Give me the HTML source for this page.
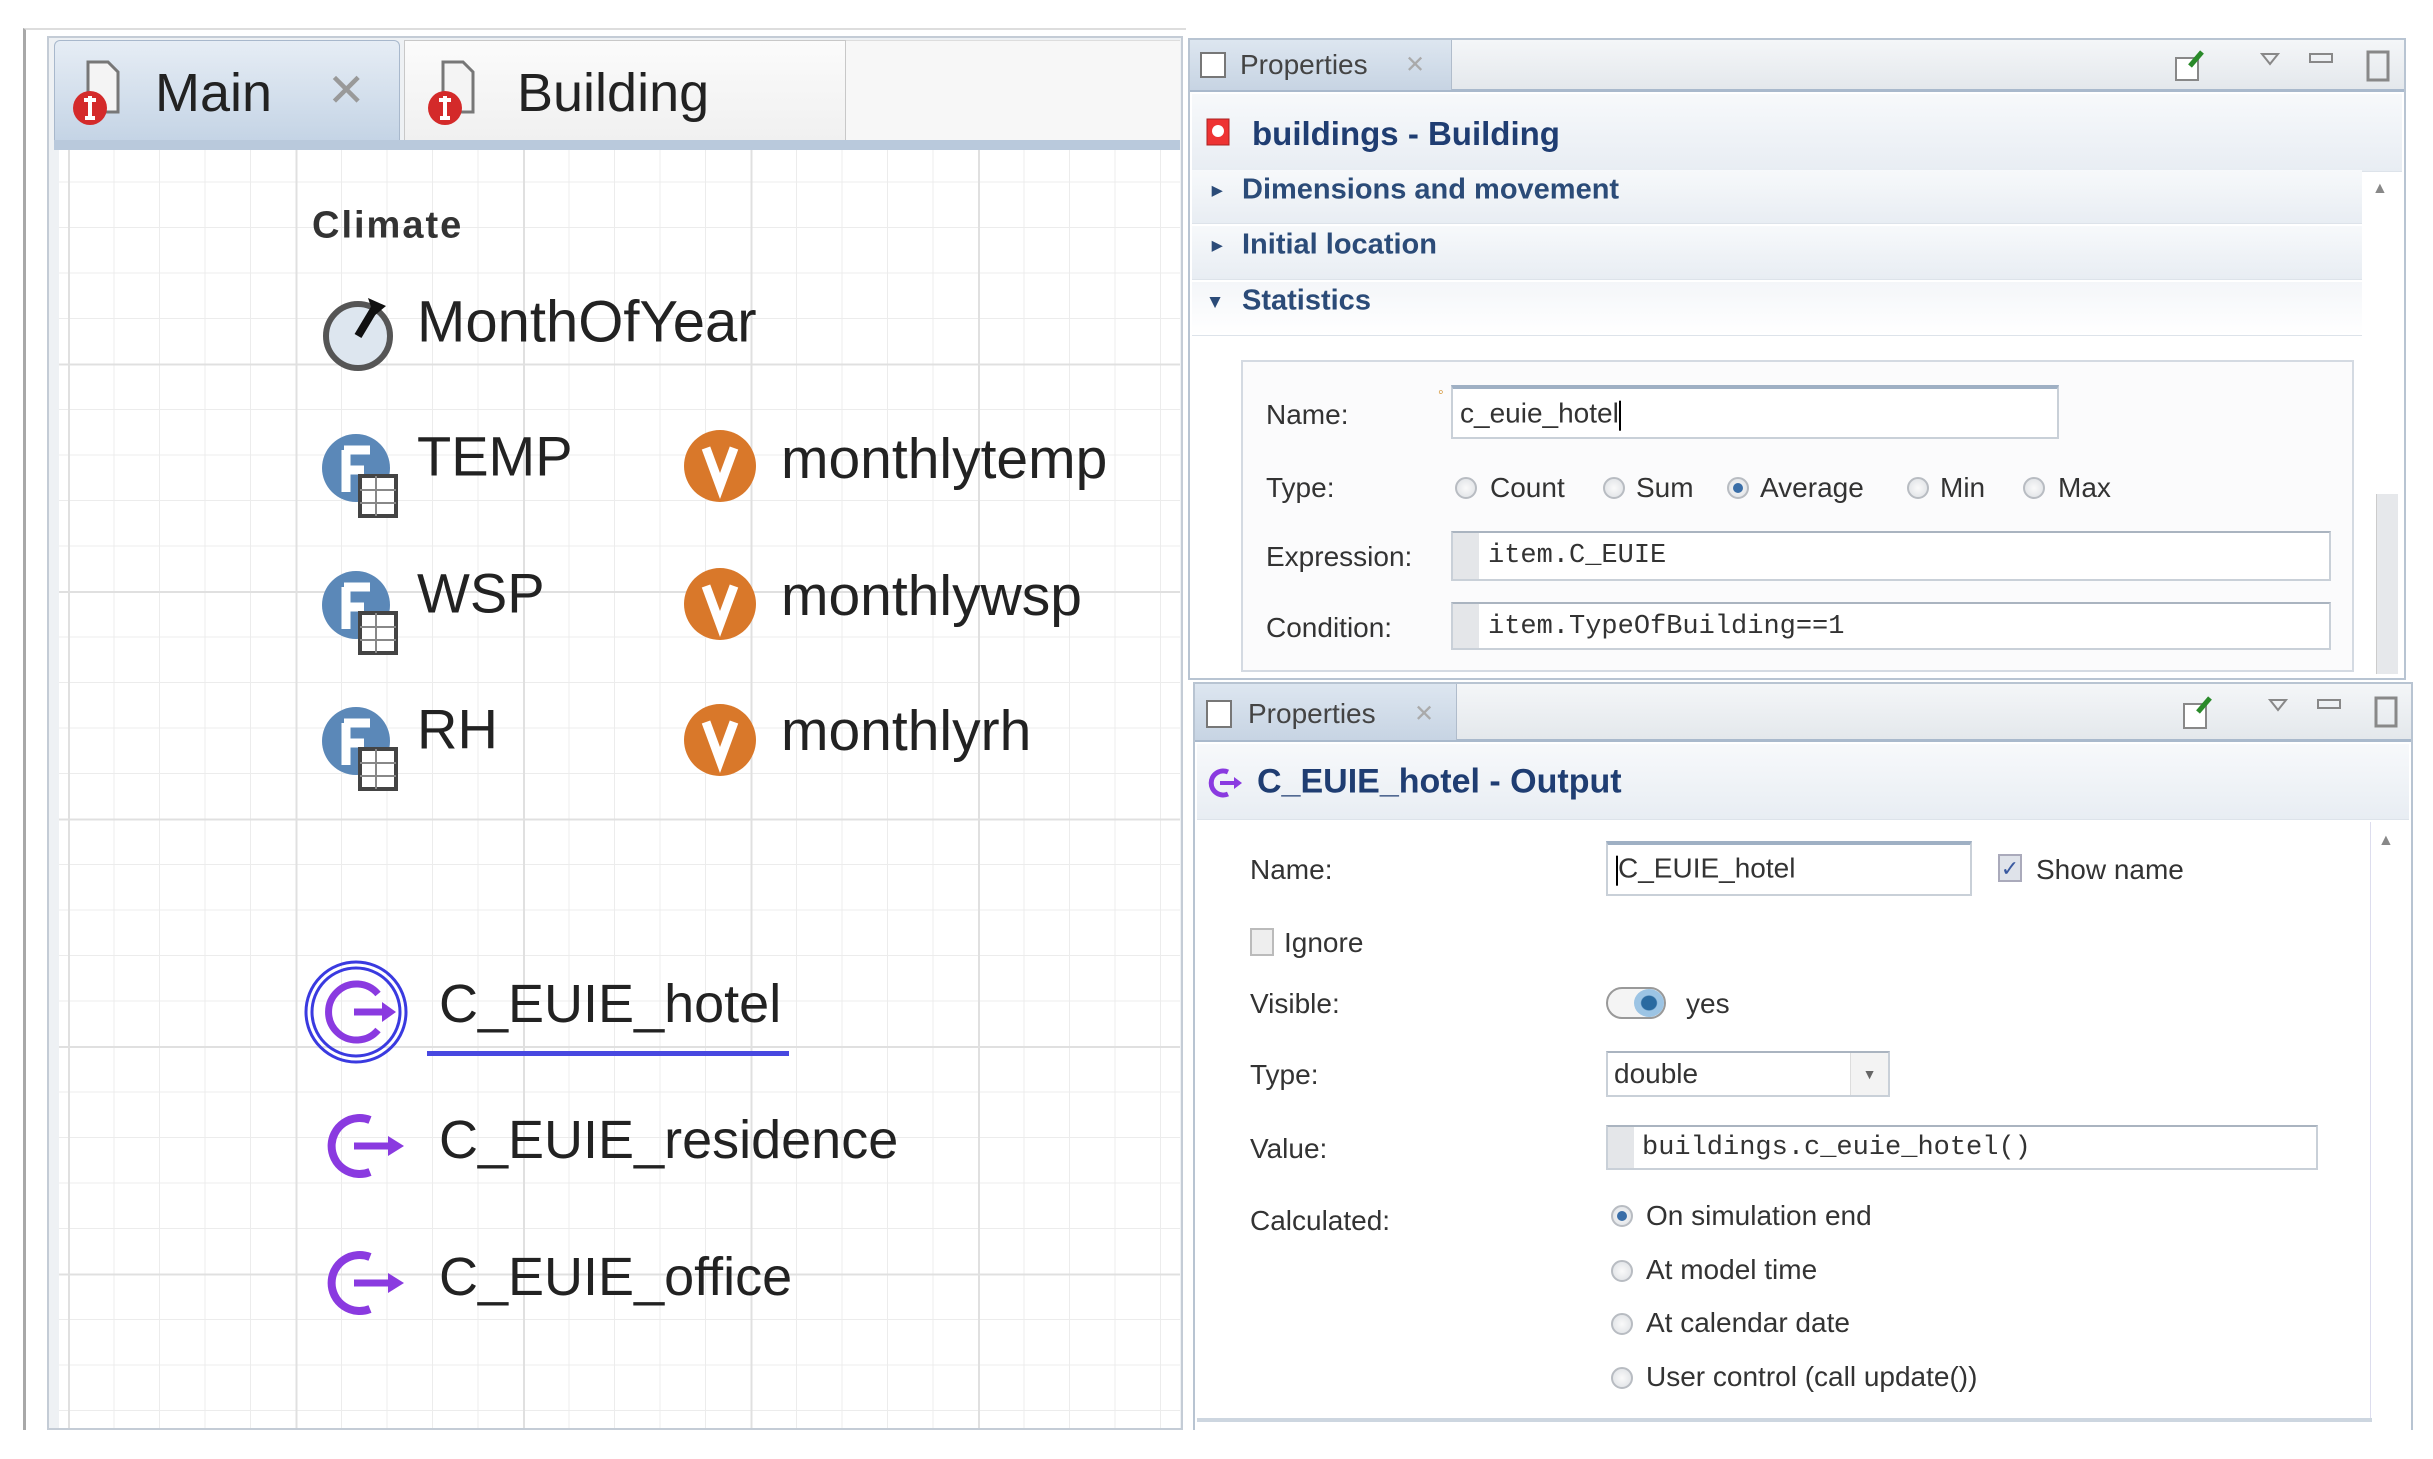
<!DOCTYPE html>
<html><head><meta charset="utf-8"><style>
*{margin:0;padding:0;box-sizing:border-box}
body{width:2433px;height:1459px;background:#fff;position:relative;overflow:hidden;font-family:"Liberation Sans",sans-serif;color:#222}
.a{position:absolute;white-space:nowrap}
.grid{background-color:#fff;background-image:
linear-gradient(to right,#e0e0e0 2px,transparent 2px),
linear-gradient(to bottom,#e0e0e0 2px,transparent 2px),
linear-gradient(to right,#ececec 1px,transparent 1px),
linear-gradient(to bottom,#ececec 1px,transparent 1px);
background-size:227.5px 227.5px,227.5px 227.5px,45.5px 45.5px,45.5px 45.5px;
background-position:9px 0,0 -14px,9px 0,0 -14px}
.lbl{font-size:28px;color:#333;transform:translateY(-50%)}
.big{font-size:56px;color:#222;transform:translateY(-50%)}
.sec{font-size:29px;font-weight:bold;color:#2b4b78;transform:translateY(-50%)}
.inp{position:absolute;background:#fff;border:2px solid #c9d0d8;border-top-color:#aab4c0}
.mono{font-family:"Liberation Mono",monospace;font-size:27px;color:#333}
.rad{position:absolute;width:22px;height:22px;border-radius:50%;border:2px solid #b8bcc2;background:radial-gradient(#fafafa,#dcdfe3);transform:translate(-50%,-50%)}
.rad.on::after{content:"";position:absolute;left:4px;top:4px;width:10px;height:10px;border-radius:50%;background:#3a6ea8}
.hdr{position:absolute;background:linear-gradient(#f4f6f8,#e4e8ec);border-bottom:3px solid #a9b9cc}
.ptab{position:absolute;background:linear-gradient(#dde6f0,#c7d4e3);border-right:1px solid #b0bccb}
.strip{position:absolute;background:linear-gradient(#f7f9fb,#e8edf3);border-bottom:1px solid #dde3ea}
</style></head><body>

<div class="a" style="left:23px;top:28px;width:1163px;height:1402px;border-left:3px solid #a8a8a8;border-top:2px solid #ddd"></div>
<div class="a" style="left:47px;top:36px;width:1136px;height:1394px;border:2px solid #c4ccd6;background:#eef1f4"></div>
<div class="a" style="left:54px;top:40px;width:346px;height:108px;background:linear-gradient(#e6edf5,#c2d2e4);border:1px solid #a8b8cc;border-bottom:none;border-radius:6px 6px 0 0"></div>
<div class="a" style="left:404px;top:40px;width:442px;height:102px;background:linear-gradient(#fbfbfb,#f0f0f0);border:1px solid #c8c8c8;border-bottom:none"></div>
<div class="a" style="left:846px;top:40px;width:334px;height:102px;background:#f7f7f7;border-top:1px solid #ddd"></div>
<div class="a" style="left:54px;top:140px;width:1126px;height:10px;background:#b9c9dc"></div>
<svg class="a" style="left:70px;top:58px" width="62" height="72" viewBox="0 0 62 72"><path d="M18 4h20l10 10v40H18z" fill="#f4f4f4" stroke="#777" stroke-width="3"/><circle cx="20" cy="50" r="17" fill="#d42a2a"/><path d="M14 42h12M20 38v22M15 60h10" stroke="#fff" stroke-width="4"/></svg>
<div class="a" style="left:155px;top:93px;font-size:54px;color:#222;transform:translateY(-50%)">Main</div>
<div class="a" style="left:327px;top:90px;font-size:46px;color:#999;transform:translateY(-50%)">✕</div>
<svg class="a" style="left:425px;top:58px" width="62" height="72" viewBox="0 0 62 72"><path d="M18 4h20l10 10v40H18z" fill="#f4f4f4" stroke="#777" stroke-width="3"/><circle cx="20" cy="50" r="17" fill="#d42a2a"/><path d="M14 42h12M20 38v22M15 60h10" stroke="#fff" stroke-width="4"/></svg>
<div class="a" style="left:517px;top:93px;font-size:54px;color:#222;transform:translateY(-50%)">Building</div>
<div class="a grid" style="left:59px;top:150px;width:1121px;height:1278px"></div>

<div class="a" style="left:312px;top:226px;font-size:38px;font-weight:bold;color:#333;letter-spacing:2px;transform:translateY(-50%)">Climate</div>

<svg class="a" style="left:318px;top:290px" width="84" height="84" viewBox="0 0 84 84"><circle cx="40" cy="46" r="32" fill="#dde6ef" stroke="#555" stroke-width="6"/><path d="M40 46L58 16" stroke="#111" stroke-width="8"/><path d="M50 8l18 8-12 10z" fill="#111"/></svg>
<div class="a big" style="left:417px;top:322px;font-size:58px">MonthOfYear</div>

<svg class="a" style="left:318px;top:430px" width="90" height="90" viewBox="0 0 90 90"><circle cx="38" cy="38" r="34" fill="#5b88b8"/><path d="M26 20h26M28 20v42M28 40h18" stroke="#fff" stroke-width="9"/><rect x="42" y="46" width="36" height="40" fill="#fff" stroke="#444" stroke-width="4"/><path d="M42 60h36M42 73h36M58 46v40" stroke="#888" stroke-width="2"/></svg>
<div class="a big" style="left:417px;top:456px">TEMP</div>
<svg class="a" style="left:318px;top:567px" width="90" height="90" viewBox="0 0 90 90"><circle cx="38" cy="38" r="34" fill="#5b88b8"/><path d="M26 20h26M28 20v42M28 40h18" stroke="#fff" stroke-width="9"/><rect x="42" y="46" width="36" height="40" fill="#fff" stroke="#444" stroke-width="4"/><path d="M42 60h36M42 73h36M58 46v40" stroke="#888" stroke-width="2"/></svg>
<div class="a big" style="left:417px;top:593px">WSP</div>
<svg class="a" style="left:318px;top:703px" width="90" height="90" viewBox="0 0 90 90"><circle cx="38" cy="38" r="34" fill="#5b88b8"/><path d="M26 20h26M28 20v42M28 40h18" stroke="#fff" stroke-width="9"/><rect x="42" y="46" width="36" height="40" fill="#fff" stroke="#444" stroke-width="4"/><path d="M42 60h36M42 73h36M58 46v40" stroke="#888" stroke-width="2"/></svg>
<div class="a big" style="left:417px;top:729px">RH</div>

<svg class="a" style="left:682px;top:428px" width="76" height="76" viewBox="0 0 76 76"><circle cx="38" cy="38" r="36" fill="#d9782a"/><path d="M24 20l14 38 14-38" fill="none" stroke="#fff" stroke-width="9"/></svg>
<div class="a big" style="left:781px;top:459px;font-size:57px">monthlytemp</div>
<svg class="a" style="left:682px;top:566px" width="76" height="76" viewBox="0 0 76 76"><circle cx="38" cy="38" r="36" fill="#d9782a"/><path d="M24 20l14 38 14-38" fill="none" stroke="#fff" stroke-width="9"/></svg>
<div class="a big" style="left:781px;top:596px;font-size:57px">monthlywsp</div>
<svg class="a" style="left:682px;top:702px" width="76" height="76" viewBox="0 0 76 76"><circle cx="38" cy="38" r="36" fill="#d9782a"/><path d="M24 20l14 38 14-38" fill="none" stroke="#fff" stroke-width="9"/></svg>
<div class="a big" style="left:781px;top:731px;font-size:57px">monthlyrh</div>

<svg class="a" style="left:302px;top:958px" width="110" height="110" viewBox="0 0 110 110"><circle cx="54" cy="54" r="50" fill="none" stroke="#3a3ae0" stroke-width="3"/><circle cx="54" cy="54" r="44" fill="none" stroke="#3a3ae0" stroke-width="3"/><path d="M76 36A28 28 0 1 0 76 72" fill="none" stroke="#8a3ae0" stroke-width="7"/><path d="M52 54h34" stroke="#8a3ae0" stroke-width="7"/><path d="M80 44l14 10-14 10z" fill="#8a3ae0"/></svg>
<div class="a big" style="left:439px;top:1004px;font-size:54px">C_EUIE_hotel</div>
<div class="a" style="left:427px;top:1051px;width:362px;height:5px;background:#4848e0"></div>
<svg class="a" style="left:316px;top:1106px" width="96" height="80" viewBox="0 0 96 80"><path d="M54 14A28 28 0 1 0 54 66" fill="none" stroke="#8a3ae0" stroke-width="8"/><path d="M38 40h40" stroke="#8a3ae0" stroke-width="7"/><path d="M72 30l16 10-16 10z" fill="#8a3ae0"/></svg>
<div class="a big" style="left:439px;top:1140px;font-size:54px">C_EUIE_residence</div>
<svg class="a" style="left:316px;top:1243px" width="96" height="80" viewBox="0 0 96 80"><path d="M54 14A28 28 0 1 0 54 66" fill="none" stroke="#8a3ae0" stroke-width="8"/><path d="M38 40h40" stroke="#8a3ae0" stroke-width="7"/><path d="M72 30l16 10-16 10z" fill="#8a3ae0"/></svg>
<div class="a big" style="left:439px;top:1277px;font-size:54px">C_EUIE_office</div>

<div class="a" style="left:1188px;top:38px;width:1218px;height:642px;border:2px solid #b8c4d2;background:#fff"></div>
<div class="hdr" style="left:1190px;top:40px;width:1214px;height:52px"></div>
<div class="ptab" style="left:1190px;top:40px;width:262px;height:50px"></div>
<div class="a" style="left:1200px;top:52px;width:26px;height:26px;border:2px solid #777;background:#fff"></div>
<div class="a" style="left:1240px;top:65px;font-size:28px;color:#444;transform:translateY(-50%)">Properties</div>
<div class="a" style="left:1405px;top:65px;font-size:24px;color:#aaa;transform:translateY(-50%)">✕</div>
<svg class="a" style="left:2172px;top:48px" width="230" height="36" viewBox="0 0 230 36"><rect x="4" y="10" width="22" height="22" fill="#fff" stroke="#888" stroke-width="2"/><path d="M18 18l12-14" stroke="#2a8a2a" stroke-width="5"/><path d="M90 6l8 10 8-10z" fill="none" stroke="#888" stroke-width="2"/><rect x="138" y="6" width="22" height="8" fill="none" stroke="#888" stroke-width="2"/><rect x="196" y="4" width="20" height="28" fill="none" stroke="#888" stroke-width="3"/></svg>

<div class="strip" style="left:1192px;top:94px;width:1210px;height:78px"></div>
<svg class="a" style="left:1206px;top:118px" width="24" height="28" viewBox="0 0 24 28"><rect x="1" y="1" width="22" height="26" fill="#e33" stroke="#a22"/><circle cx="12" cy="13" r="6" fill="#fff"/></svg>
<div class="a" style="left:1252px;top:134px;font-size:33px;font-weight:bold;color:#1f3d72;transform:translateY(-50%)">buildings - Building</div>
<div class="strip" style="left:1192px;top:170px;width:1170px;height:54px"></div>
<div class="strip" style="left:1192px;top:226px;width:1170px;height:54px"></div>
<div class="strip" style="left:1192px;top:282px;width:1170px;height:54px;background:linear-gradient(#f4f6f9,#fff)"></div>
<div class="a sec" style="left:1212px;top:190px;font-size:20px">▸</div>
<div class="a sec" style="left:1242px;top:190px">Dimensions and movement</div>
<div class="a sec" style="left:1212px;top:245px;font-size:20px">▸</div>
<div class="a sec" style="left:1242px;top:245px">Initial location</div>
<div class="a sec" style="left:1210px;top:301px;font-size:20px">▾</div>
<div class="a sec" style="left:1242px;top:301px">Statistics</div>
<div class="a" style="left:2372px;top:180px;font-size:16px;color:#888">▲</div>
<div class="a" style="left:2376px;top:494px;width:22px;height:180px;background:#e6e8eb;border-left:1px solid #ccc"></div>

<div class="a" style="left:1241px;top:360px;width:1113px;height:312px;border:2px solid #d4dae2;background:#fbfbfc"></div>
<div class="a lbl" style="left:1266px;top:415px">Name:</div>
<div class="a" style="left:1438px;top:384px;font-size:16px;color:#d08a20">◦</div>
<div class="inp" style="left:1451px;top:385px;width:608px;height:54px;border-top:4px solid #9fb0c4"></div>
<div class="a lbl" style="left:1460px;top:414px">c_euie_hotel<span style="display:inline-block;width:2px;height:30px;background:#000;vertical-align:middle"></span></div>
<div class="a lbl" style="left:1266px;top:488px">Type:</div>
<div class="rad" style="left:1466px;top:488px"></div><div class="a lbl" style="left:1490px;top:488px">Count</div>
<div class="rad" style="left:1614px;top:488px"></div><div class="a lbl" style="left:1636px;top:488px">Sum</div>
<div class="rad on" style="left:1738px;top:488px"></div><div class="a lbl" style="left:1760px;top:488px">Average</div>
<div class="rad" style="left:1918px;top:488px"></div><div class="a lbl" style="left:1940px;top:488px">Min</div>
<div class="rad" style="left:2034px;top:488px"></div><div class="a lbl" style="left:2058px;top:488px">Max</div>
<div class="a lbl" style="left:1266px;top:557px">Expression:</div>
<div class="inp" style="left:1451px;top:531px;width:880px;height:50px"><div style="position:absolute;left:0;top:0;width:26px;height:100%;background:#e4e6e9"></div></div>
<div class="a mono lbl" style="left:1488px;top:556px;font-family:'Liberation Mono',monospace">item.C_EUIE</div>
<div class="a lbl" style="left:1266px;top:628px">Condition:</div>
<div class="inp" style="left:1451px;top:602px;width:880px;height:48px"><div style="position:absolute;left:0;top:0;width:26px;height:100%;background:#e4e6e9"></div></div>
<div class="a mono lbl" style="left:1488px;top:627px;font-family:'Liberation Mono',monospace">item.TypeOfBuilding==1</div>

<div class="a" style="left:1193px;top:682px;width:1220px;height:748px;border:2px solid #b8c4d2;border-bottom:none;background:#fff"></div>
<div class="hdr" style="left:1195px;top:684px;width:1216px;height:58px"></div>
<div class="ptab" style="left:1195px;top:684px;width:262px;height:56px"></div>
<div class="a" style="left:1206px;top:700px;width:26px;height:28px;border:2px solid #777;background:#fff"></div>
<div class="a" style="left:1248px;top:714px;font-size:28px;color:#444;transform:translateY(-50%)">Properties</div>
<div class="a" style="left:1414px;top:714px;font-size:24px;color:#aaa;transform:translateY(-50%)">✕</div>
<svg class="a" style="left:2180px;top:692px" width="230" height="40" viewBox="0 0 230 40"><rect x="4" y="12" width="22" height="24" fill="#fff" stroke="#888" stroke-width="2"/><path d="M18 20l12-14" stroke="#2a8a2a" stroke-width="5"/><path d="M90 8l8 10 8-10z" fill="none" stroke="#888" stroke-width="2"/><rect x="138" y="8" width="22" height="8" fill="none" stroke="#888" stroke-width="2"/><rect x="196" y="6" width="20" height="28" fill="none" stroke="#888" stroke-width="3"/></svg>
<div class="strip" style="left:1197px;top:744px;width:1212px;height:76px"></div>
<svg class="a" style="left:1206px;top:766px" width="40" height="34" viewBox="0 0 40 34"><path d="M22 6A12 12 0 1 0 22 28" fill="none" stroke="#8a3ae0" stroke-width="5"/><path d="M14 17h18" stroke="#8a3ae0" stroke-width="4"/><path d="M28 11l8 6-8 6z" fill="#8a3ae0"/></svg>
<div class="a" style="left:1257px;top:782px;font-size:34px;font-weight:bold;color:#1f3d72;transform:translateY(-50%)">C_EUIE_hotel - Output</div>
<div class="a" style="left:2378px;top:832px;font-size:16px;color:#888">▲</div>
<div class="a" style="left:2370px;top:822px;width:1px;height:600px;background:#dde"></div>

<div class="a lbl" style="left:1250px;top:870px">Name:</div>
<div class="inp" style="left:1606px;top:841px;width:366px;height:55px;border-top:4px solid #9fb0c4"></div>
<div class="a lbl" style="left:1616px;top:869px"><span style="display:inline-block;width:2px;height:30px;background:#000;vertical-align:middle"></span>C_EUIE_hotel</div>
<div class="a" style="left:1998px;top:854px;width:24px;height:28px;border:2px solid #aab;background:#dfe3ea;font-size:22px;color:#3a5aa0;text-align:center;line-height:26px">✓</div>
<div class="a lbl" style="left:2036px;top:870px">Show name</div>
<div class="a" style="left:1250px;top:928px;width:24px;height:28px;border:2px solid #bbb;background:#eee"></div>
<div class="a lbl" style="left:1284px;top:943px">Ignore</div>
<div class="a lbl" style="left:1250px;top:1004px">Visible:</div>
<div class="a" style="left:1606px;top:987px;width:60px;height:32px;border:2px solid #999;border-radius:16px;background:#f4f4f4"></div>
<div class="a" style="left:1634px;top:989px;width:30px;height:28px;border-radius:50%;background:radial-gradient(#2a6aa0 35%,#9cc4e4 40%)"></div>
<div class="a lbl" style="left:1686px;top:1004px">yes</div>
<div class="a lbl" style="left:1250px;top:1075px">Type:</div>
<div class="inp" style="left:1606px;top:1051px;width:284px;height:46px"><div style="position:absolute;right:0;top:0;width:38px;height:100%;border-left:1px solid #ddd;background:#f3f3f3;text-align:center;font-size:14px;line-height:42px;color:#666">▼</div></div>
<div class="a lbl" style="left:1614px;top:1074px">double</div>
<div class="a lbl" style="left:1250px;top:1149px">Value:</div>
<div class="inp" style="left:1606px;top:1125px;width:712px;height:45px"><div style="position:absolute;left:0;top:0;width:26px;height:100%;background:#e4e6e9"></div></div>
<div class="a mono lbl" style="left:1642px;top:1148px;font-family:'Liberation Mono',monospace">buildings.c_euie_hotel()</div>
<div class="a lbl" style="left:1250px;top:1221px">Calculated:</div>
<div class="rad on" style="left:1622px;top:1216px"></div><div class="a lbl" style="left:1646px;top:1216px">On simulation end</div>
<div class="rad" style="left:1622px;top:1271px"></div><div class="a lbl" style="left:1646px;top:1270px">At model time</div>
<div class="rad" style="left:1622px;top:1324px"></div><div class="a lbl" style="left:1646px;top:1323px">At calendar date</div>
<div class="rad" style="left:1622px;top:1378px"></div><div class="a lbl" style="left:1646px;top:1377px">User control (call update())</div>
<div class="a" style="left:1197px;top:1418px;width:1175px;height:4px;background:#cdd6e0"></div>
</body></html>
